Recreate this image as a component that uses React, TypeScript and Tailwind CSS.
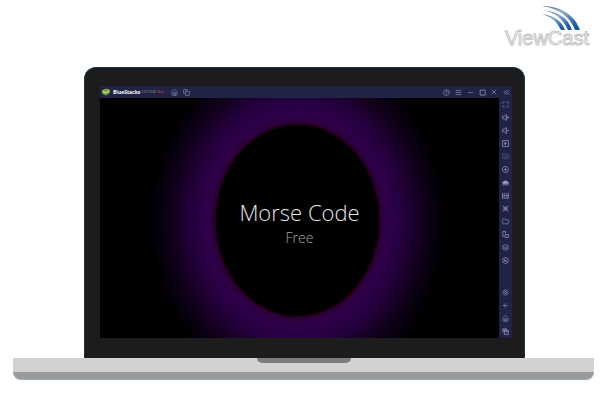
import React from 'react';
import {
  ArrowLeft,
  ChevronsLeft,
  CircleHelp,
  Copy,
  Folder,
  House,
  Keyboard,
  Layers,
  Maximize,
  Menu,
  Minus,
  Settings,
  X,
} from 'lucide-react';

interface Tool {
  label: string;
  icon: React.ReactNode;
  dim?: boolean;
}

const iconClass = 'size-[7px]';

function Glyph({ children }: { children: React.ReactNode }) {
  return (
    <svg
      viewBox="0 0 24 24"
      className={iconClass}
      fill="none"
      stroke="currentColor"
      strokeWidth="2.5"
      aria-hidden="true"
    >
      {children}
    </svg>
  );
}

const windowTools: Tool[] = [
  { label: 'Help', icon: <CircleHelp className={iconClass} /> },
  { label: 'Menu', icon: <Menu className={iconClass} /> },
  { label: 'Minimize', icon: <Minus className={iconClass} /> },
  {
    label: 'Maximize',
    icon: (
      <Glyph>
        <path d="M4 4h17v17H4z" />
      </Glyph>
    ),
  },
  { label: 'Close', icon: <X className="size-2" /> },
  { label: 'Collapse sidebar', icon: <ChevronsLeft className="size-[9px]" /> },
];

const sideTools: Tool[] = [
  { label: 'Full screen', icon: <Maximize className={iconClass} /> },
  {
    label: 'Volume up',
    icon: (
      <Glyph>
        <path d="M2 8h5l8-6v20l-8-6H2z M16 12h8 M20 8v8" />
      </Glyph>
    ),
  },
  {
    label: 'Volume down',
    icon: (
      <Glyph>
        <path d="M2 8h5l8-6v20l-8-6H2z M17 12h7" />
      </Glyph>
    ),
  },
  {
    label: 'Lock cursor',
    icon: (
      <Glyph>
        <path d="M2 2h20v20H2z" />
        <path d="M10 8l5 4-5 4z" fill="currentColor" />
      </Glyph>
    ),
  },
  { label: 'Game controls', icon: <Keyboard className={iconClass} />, dim: true },
  {
    label: 'Sync operations',
    icon: (
      <Glyph>
        <path d="M17 20a10 10 0 1 1 3-3 M15 20h6" />
        <circle cx="12" cy="12" r="2.5" fill="currentColor" />
      </Glyph>
    ),
  },
  {
    label: 'Install app',
    icon: (
      <Glyph>
        <path d="M2 15c0-4 2-6 5-6 1-4 9-4 10 0 3 0 5 2 5 6z" fill="currentColor" />
        <path d="M1 20h22" />
      </Glyph>
    ),
  },
  {
    label: 'Screenshot',
    icon: (
      <Glyph>
        <path d="M2 3v18h20V3 M2 12h20 M8 3v6 M16 3v6 M6 17h4 M14 17h4" />
      </Glyph>
    ),
  },
  {
    label: 'Record screen',
    icon: (
      <Glyph>
        <path d="M7 7h10v10H7z M2 2l5 5 M22 2l-5 5 M2 22l5-5 M22 22l-5-5" />
        <path d="M10 11h4v3h-4z" />
      </Glyph>
    ),
  },
  { label: 'Media folder', icon: <Folder className={iconClass} /> },
  {
    label: 'Rotate',
    icon: (
      <Glyph>
        <path d="M9 18H3V2h9v7 M11 12h11v10H11z" />
      </Glyph>
    ),
  },
  { label: 'Multi-instance', icon: <Layers className={iconClass} /> },
  {
    label: 'Macro recorder',
    icon: (
      <Glyph>
        <circle cx="12" cy="12" r="10" />
        <path d="M9 7v7h7 M9 9l7 7" />
      </Glyph>
    ),
  },
];

const navTools: Tool[] = [
  { label: 'Settings', icon: <Settings className={iconClass} /> },
  { label: 'Back', icon: <ArrowLeft className={iconClass} /> },
  { label: 'Android home', icon: <House className={iconClass} /> },
  {
    label: 'Recent apps',
    icon: (
      <Glyph>
        <path d="M3 15V3h13v4 M3 7h13 M8 9h14v13H8z M8 13h14" />
      </Glyph>
    ),
  },
];

function ToolButton({ tool, className }: { tool: Tool; className: string }) {
  return (
    <button
      type="button"
      aria-label={tool.label}
      className={`flex items-center justify-center ${tool.dim ? 'text-[#5a5e85]' : 'text-[#9a9cbe]'} ${className}`}
    >
      {tool.icon}
    </button>
  );
}

function ViewCastLogo() {
  return (
    <div className="flex flex-col items-end">
      <svg viewBox="0 0 38 25" className="mr-[9px] h-[25px] w-[38px]" aria-hidden="true">
        <defs>
          <linearGradient id="swoosh" x1="0" y1="0" x2="1" y2="1">
            <stop offset="0" stopColor="#5c6f90" />
            <stop offset="0.4" stopColor="#8eabd1" />
            <stop offset="0.8" stopColor="#2160a6" />
            <stop offset="1" stopColor="#17549b" />
          </linearGradient>
        </defs>
        <g fill="url(#swoosh)">
          <path d="M0 1C20 1 33 11 38 25H33C28 12 18 4 0 1Z" />
          <path d="M1 5C17 7 26 13 30 25H26C21 14 14 8 1 5Z" />
          <path d="M0 9C12 11 19 15 23 25H19C15 17 10 12 0 9Z" />
        </g>
      </svg>
      <span className="font-['Liberation_Sans',Arial,sans-serif] text-xl leading-4 text-white [-webkit-text-stroke:1px_#c4c4c4]">
        ViewCast
      </span>
    </div>
  );
}

function BlueStacksMark() {
  return (
    <svg viewBox="0 0 24 24" className="size-2" aria-hidden="true">
      <path d="M1 14l11-4 11 2v4l-11 7-11-5z" fill="#29935a" />
      <path d="M1 10l11-4 11 2v4l-11 6-11-4z" fill="#e2c43d" />
      <path d="M1 7l11-5 11 3v3l-11 6-11-4z" fill="#90c83e" />
      <path d="M6 8l7-3 5 1-7 4z" fill="#427840" />
    </svg>
  );
}

function TitleBar() {
  return (
    <div className="flex h-3 shrink-0 items-center justify-between bg-[#212344]">
      <div className="flex items-center pl-0.5">
        <BlueStacksMark />
        <span className="ml-[3px] text-[5px] leading-3 font-bold text-white">BlueStacks</span>
        <span className="ml-px text-[3px] leading-3 text-[#a0a2bc]">5.0.0.7228</span>
        <span className="ml-0.5 text-[3px] leading-3 text-[#d15b48]">Beta</span>
        <ToolButton tool={{ label: 'Home', icon: <House className={iconClass} /> }} className="ml-[5px] h-3 w-3" />
        <ToolButton tool={{ label: 'Tabs', icon: <Copy className={iconClass} /> }} className="h-3 w-3" />
      </div>
      <div className="flex">
        {windowTools.map(tool => (
          <ToolButton key={tool.label} tool={tool} className="h-3 w-3" />
        ))}
      </div>
    </div>
  );
}

function SideBar() {
  return (
    <div className="flex w-[13px] shrink-0 flex-col justify-between bg-[#212344]">
      <div className="flex flex-col">
        {sideTools.map(tool => (
          <ToolButton key={tool.label} tool={tool} className="h-[13px]" />
        ))}
      </div>
      <div className="flex flex-col">
        {navTools.map(tool => (
          <ToolButton key={tool.label} tool={tool} className="h-[13px]" />
        ))}
      </div>
    </div>
  );
}

function SplashScreen() {
  return (
    <div className="flex flex-1 flex-col items-center justify-center bg-black bg-[radial-gradient(ellipse_37%_72%_at_49.5%_51%,#000_54.5%,#1f0012_55.5%,#2b003c_57%,#2e0049_62%,#22003a_73%,#14001f_83%,#06000c_94%,#000_100%)] pt-3 font-['Open_Sans','Noto_Sans',sans-serif] font-light">
      <h1 className="text-[22px] leading-7 text-[#e4e4e4]">Morse Code</h1>
      <p className="text-sm leading-6 text-[#a8a8a8]">Free</p>
    </div>
  );
}

export default function App() {
  return (
    <div className="min-h-screen bg-white font-['Open_Sans','Noto_Sans',sans-serif]">
      <header className="flex justify-end pt-[5px] pr-[13px]">
        <ViewCastLogo />
      </header>

      <main className="pt-[21px] pr-2 pl-[13px]">
        {/* Lid */}
        <div className="mr-[69px] ml-[71px] rounded-t-xl border-x border-t border-[#173448] bg-[#1c1c1c] pt-[18px] pr-3 pb-5 pl-[15px]">
          <div className="flex aspect-[412/252] w-full flex-col overflow-hidden">
            <TitleBar />
            <div className="flex flex-1">
              <SplashScreen />
              <SideBar />
            </div>
          </div>
        </div>

        {/* Base */}
        <div className="overflow-hidden rounded-b-lg border-b border-[#91afc0] bg-[#9b9c9a]">
          <div className="flex h-3.5 justify-center bg-[#d2d2d2]">
            <div className="h-[5px] w-[94px] rounded-b-lg bg-[#7d7d7d]" />
          </div>
          <div className="h-[7px]" />
        </div>
      </main>
    </div>
  );
}
